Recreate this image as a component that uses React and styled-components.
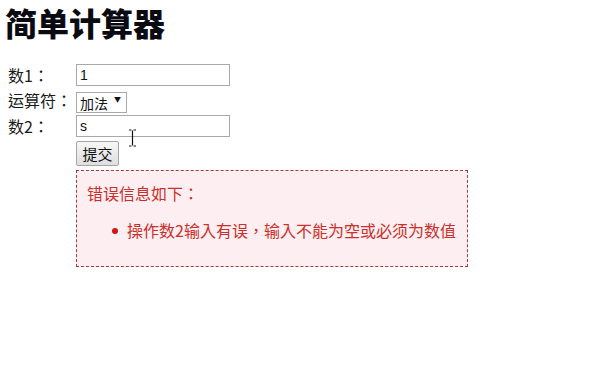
import React from "react";
import styled, { createGlobalStyle } from "styled-components";

const Global = createGlobalStyle`
  html, body { margin: 0; padding: 0; background: #fff; }
  body { font-family: "Noto Sans CJK SC", "Liberation Sans", sans-serif; color: #111; }
`;

const Page = styled.div`
  position: relative;
  width: 592px;
  height: 370px;
  padding: 0 0 0 8px;
  box-sizing: border-box;
`;

const Title = styled.h1`
  margin: 0 0 0 -3px;
  height: 46px;
  font-size: 32px;
  line-height: 44px;
  font-weight: 900;
  color: #0a0a12;
`;

const Form = styled.div`
  margin-top: 18px;
  display: grid;
  grid-template-columns: 68px auto;
  row-gap: 4px;
  align-items: center;
  justify-items: start;
`;

const Label = styled.div`
  font-family: "Noto Sans CJK TC", "Noto Sans CJK SC", sans-serif;
  font-size: 16px;
  line-height: 21px;
  color: #1a1a1a;
`;

const TextInput = styled.input`
  box-sizing: border-box;
  width: 154px;
  height: 22px;
  margin: 0;
  padding: 0 3px;
  border: 1px solid #a9a9a9;
  font-family: "Liberation Sans", Arial, sans-serif;
  font-size: 14px;
  color: #111;
  outline: none;
  background: #fff;
`;

const SelectWrap = styled.div`
  position: relative;
  width: 51px;
  height: 21px;
`;

const Select = styled.select`
  appearance: none;
  box-sizing: border-box;
  width: 51px;
  height: 21px;
  margin: 0;
  padding: 0 0 0 3px;
  border: 1px solid #a9a9a9;
  border-radius: 0;
  background: #fff;
  font-family: "Noto Sans CJK SC", sans-serif;
  font-size: 14px;
  color: #111;
  outline: none;
`;

const Arrow = styled.span`
  position: absolute;
  right: 6px;
  top: 5px;
  font-size: 7px;
  line-height: 8px;
  color: #111;
  pointer-events: none;
`;

const Button = styled.button`
  box-sizing: border-box;
  width: 43px;
  height: 25px;
  margin: 0;
  padding: 0;
  border: 1px solid #a5a5a5;
  border-radius: 2px;
  background: linear-gradient(#f7f7f7, #dedede);
  font-family: "Noto Sans CJK SC", sans-serif;
  font-size: 15px;
  line-height: 23px;
  color: #111;
`;

const ErrorBox = styled.div`
  grid-column: 2;
  box-sizing: border-box;
  width: 392px;
  height: 97px;
  border: 1px dashed #a83a3a;
  background: #fdeef1;
  padding: 11px 0 0 10px;
  color: #c8302c;
  font-family: "Noto Sans CJK TC", "Noto Sans CJK SC", sans-serif;
  font-size: 16px;
`;

const ErrorTitle = styled.div`
  line-height: 22px;
`;

const ErrorList = styled.ul`
  margin: 15px 0 0 0;
  padding-left: 40px;
  list-style: none;
`;

const ErrorItem = styled.li`
  position: relative;
  font-size: 16px;
  line-height: 22px;
  &::before {
    content: "";
    position: absolute;
    left: -15px;
    top: 9px;
    width: 6px;
    height: 6px;
    border-radius: 50%;
    background: #d4141a;
  }
`;

const Cursor = styled.svg`
  position: absolute;
  left: 128px;
  top: 129px;
`;

export default function App() {
  return (
    <Page>
      <Global />
      <Title>简单计算器</Title>
      <Form>
        <Label>数1：</Label>
        <TextInput defaultValue="1" />
        <Label>运算符：</Label>
        <SelectWrap>
          <Select defaultValue="add">
            <option value="add">加法</option>
            <option value="sub">减法</option>
          </Select>
          <Arrow>▼</Arrow>
        </SelectWrap>
        <Label>数2：</Label>
        <TextInput defaultValue="s" />
        <span />
        <Button>提交</Button>
        <span />
        <ErrorBox>
          <ErrorTitle>错误信息如下：</ErrorTitle>
          <ErrorList>
            <ErrorItem>操作数2输入有误，输入不能为空或必须为数值</ErrorItem>
          </ErrorList>
        </ErrorBox>
      </Form>
      <Cursor width="9" height="18" viewBox="0 0 9 18">
        <path d="M1 1h2.5M5.5 1H8M4.5 1.5v15M1 17h2.5M5.5 17H8" stroke="#111" strokeWidth="1.2" fill="none" />
      </Cursor>
    </Page>
  );
}
